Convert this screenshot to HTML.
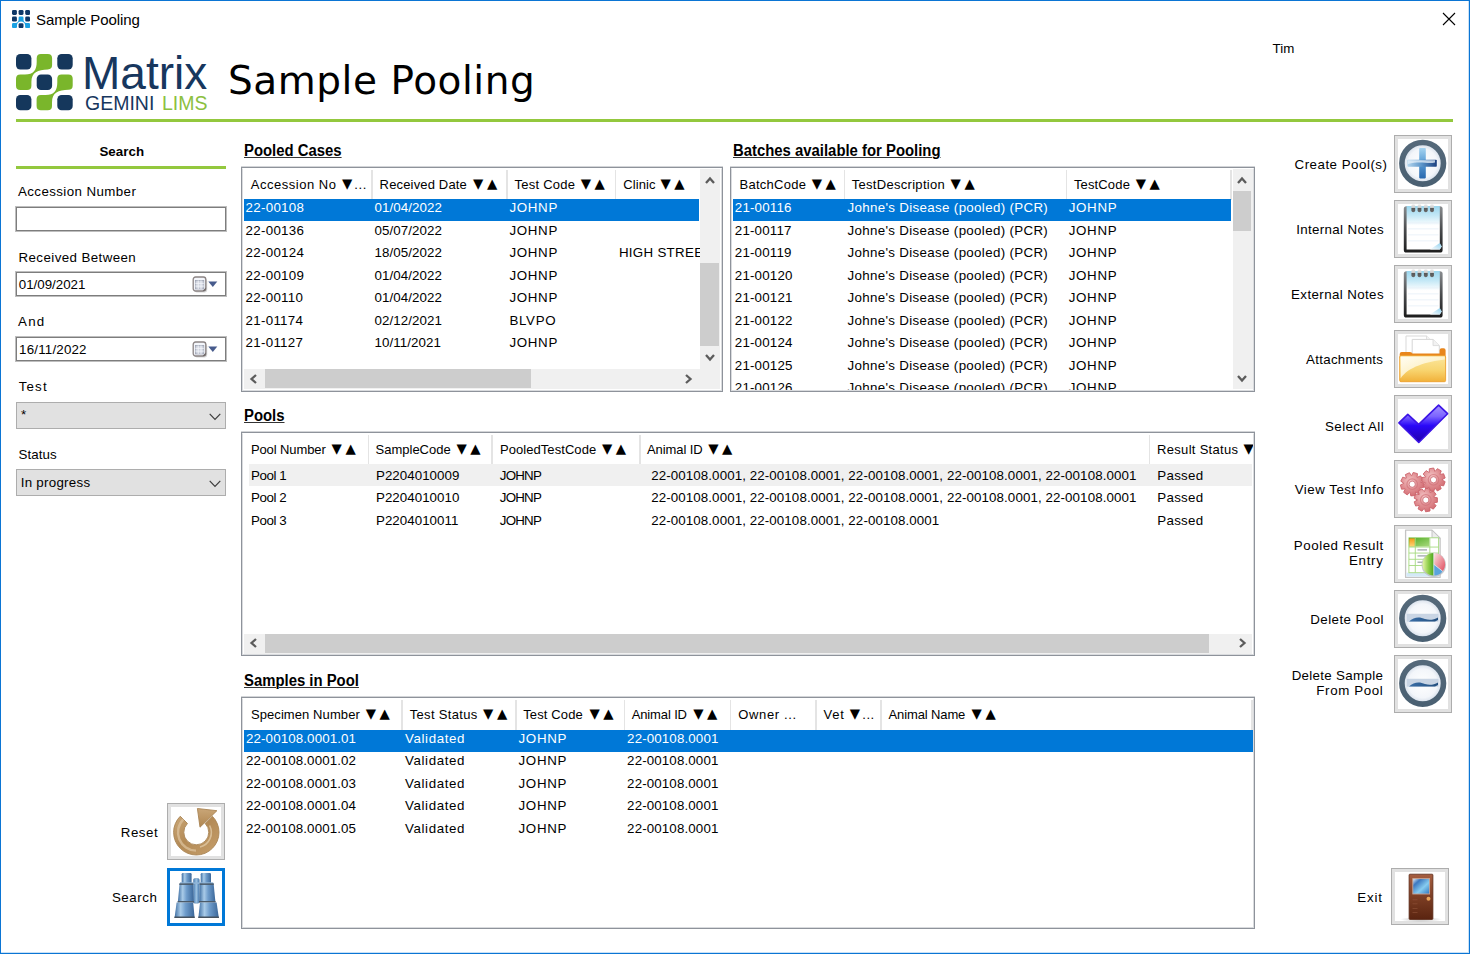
<!DOCTYPE html>
<html><head><meta charset="utf-8"><title>Sample Pooling</title>
<style>
*{box-sizing:border-box;margin:0;padding:0}
html,body{width:1470px;height:954px;overflow:hidden;background:#fff}
body{position:relative;font-family:"Liberation Sans",sans-serif;font-size:13.33px;color:#000;letter-spacing:0}
#win{position:absolute;left:0;top:0;width:1470px;height:954px;border:1px solid #0b75d4;box-shadow:inset -1px -1px 0 rgba(11,117,212,.22)}
.t{position:absolute;white-space:nowrap;line-height:16px;letter-spacing:.3px}
.r{text-align:right}
.gl{position:absolute;background:#93c83e}
.sec{font-weight:bold;font-size:16px;text-decoration:underline;text-decoration-thickness:1.4px;text-decoration-color:#333;text-underline-offset:1.2px;line-height:18px;letter-spacing:0;transform:scaleX(.93);transform-origin:0 0}
.lb{position:absolute;border:1px solid #8e939b;background:#fff;overflow:hidden;box-shadow:0 -1px 0 #d3d5d8}
.lb:after{content:"";position:absolute;left:0;top:0;right:0;bottom:0;border:1px solid #d9dbde;border-top-color:transparent;pointer-events:none}
.hd{position:absolute;top:1.5px;height:30px;line-height:30px;white-space:nowrap;font-size:13px}
.hd.ar{font-family:"DejaVu Sans",sans-serif;font-size:13.4px;letter-spacing:3.5px;top:1px}
.dv{position:absolute;top:2px;width:1.6px;height:30px;background:#e4e4e4}
.row{position:absolute;height:22px;white-space:nowrap}
.row span{position:absolute;top:0;line-height:17px;letter-spacing:.25px}
.sel{background:#0078d7;color:#fff}
.hot{background:#f0f0f0}
.r2 span{top:2.5px}
.sb{position:absolute;background:#f0f0f0}
.th{position:absolute;background:#cdcdcd}
.sa{position:absolute}
.btn{position:absolute;width:58px;height:58px;border:1px solid #adadad;background:#e1e1e1}
.btn i{position:absolute;left:3px;top:3px;right:3px;bottom:3px;background:#fff;display:block}
.btn svg{position:absolute;left:-1px;top:-1px}
.sbtn{border:3px solid #0078d7;background:#fff}
.sbtn svg{left:-3px;top:-3px}
.inp{position:absolute;border:1px solid #7d7d7d;background:#fff;box-shadow:0 0 0 1px rgba(125,125,125,.5)}
.cmb{position:absolute;border:1px solid #adadad;background:#e1e1e1}
</style></head><body>
<div id="win"></div>
<!-- TITLEBAR -->
<svg style="position:absolute;left:12px;top:10px" width="18" height="18" viewBox="0 0 18 18">
<g fill="#0d3767"><rect x="0" y="0" width="4.9" height="4.9" rx="1.3"/><rect x="6.6" y="0" width="4.9" height="4.9" rx="1.3"/><rect x="13.2" y="0" width="4.9" height="4.9" rx="1.3"/><rect x="0" y="6.6" width="4.9" height="4.9" rx="1.3"/><rect x="13.2" y="6.6" width="4.9" height="4.9" rx="1.3"/><rect x="6.6" y="13.2" width="4.9" height="4.9" rx="1.3"/></g>
<path fill="#18a0e2" d="M7.9 6.5 H10.2 Q11.5 6.5 11.5 7.8 V9.5 Q11.6 12.6 14.5 13.1 H16.8 Q18.1 13.1 18.1 14.4 V16.8 Q18.1 18.1 16.8 18.1 H14.4 Q13.1 18.1 13.1 16.8 V15 Q12.6 11.8 9.05 11.6 Q5.5 11.8 5 15 V16.8 Q5 18.1 3.7 18.1 H1.3 Q0 18.1 0 16.8 V14.4 Q0 13.1 1.3 13.1 H3.6 Q6.5 12.6 6.6 9.5 V7.8 Q6.6 6.5 7.9 6.5 Z"/>
</svg>
<div class="t" id="ttl" style="left:36px;top:10px;font-size:15px;line-height:20px;letter-spacing:-.1px">Sample Pooling</div>
<svg style="position:absolute;left:1442px;top:12px" width="14" height="14" viewBox="0 0 14 14"><path d="M1 1 L13 13 M13 1 L1 13" stroke="#000" stroke-width="1.1" fill="none"/></svg>
<!-- HEADER -->
<svg style="position:absolute;left:16px;top:54px" width="57" height="57" viewBox="0 0 57 57">
<g fill="#15375c"><rect x="0" y="0" width="15.4" height="15.4" rx="4.3"/><rect x="41.3" y="0" width="15.4" height="15.4" rx="4.3"/><rect x="20.7" y="20.5" width="15.4" height="15.5" rx="4.3"/><rect x="0" y="41" width="15.4" height="15.2" rx="4.3"/><rect x="41.3" y="41" width="15.4" height="15.2" rx="4.3"/></g>
<g fill="#7ab62b"><path id="sw" d="M24.9 0 H31.8 Q36.1 0 36.1 4.3 V11.1 Q36.1 15.4 31.8 15.4 C22 15.6 15.4 18 15.4 28 V31.7 Q15.4 36 11.1 36 H4.3 Q0 36 0 31.7 V24.8 Q0 20.5 4.3 20.5 H9 C17.5 20.5 20.7 16 20.7 8 V4.3 Q20.7 0 24.9 0 Z"/><path transform="translate(20.6,20.4)" d="M24.9 0 H31.8 Q36.1 0 36.1 4.3 V11.1 Q36.1 15.4 31.8 15.4 C22 15.6 15.4 18 15.4 28 V31.5 Q15.4 35.8 11.1 35.8 H4.3 Q0 35.8 0 31.5 V24.8 Q0 20.5 4.3 20.5 H9 C17.5 20.5 20.7 16 20.7 8 V4.3 Q20.7 0 24.9 0 Z"/></g>
</svg>
<div class="t" id="matrix" style="left:82px;top:47px;font-size:46px;line-height:52px;color:#17375e;letter-spacing:0">Matrix</div>
<div class="t" id="gemini" style="left:85px;top:92px;font-size:19.5px;line-height:22px;color:#17375e;letter-spacing:0;word-spacing:2.2px">GEMINI <span style="color:#8cc03f">LIMS</span></div>
<div class="t" id="big" style="left:228px;top:57px;font-family:'DejaVu Sans',sans-serif;font-size:39px;line-height:48px;letter-spacing:.55px">Sample Pooling</div>
<div class="t" id="tim" style="left:1272.6px;top:40.5px;letter-spacing:0">Tim</div>
<div class="gl" style="left:16px;top:119px;width:1437px;height:3px"></div>
<div class="t sec" style="left:244px;top:141.6px">Pooled Cases</div>
<div class="lb" style="left:241px;top:167px;width:482px;height:225px">
<div class="dv" style="left:129.0px"></div><div class="dv" style="left:264.0px"></div><div class="dv" style="left:372.8px"></div>
<div class="hd" style="left:8.8px;letter-spacing:0.52px">Accession No</div><div class="hd ar" style="left:99.9px">▼</div><div class="hd" style="left:112.3px;letter-spacing:.6px">...</div><div class="hd" style="left:137.6px;letter-spacing:0.16px">Received Date</div><div class="hd ar" style="left:231.1px">▼▲</div><div class="hd" style="left:272.6px;letter-spacing:0.23px">Test Code</div><div class="hd ar" style="left:338.8px">▼▲</div><div class="hd" style="left:381.2px;letter-spacing:0.12px">Clinic</div><div class="hd ar" style="left:418.4px">▼▲</div>
<div class="row  sel" style="left:2px;top:31.0px;width:455px"><span style="left:1.5px;letter-spacing:0.3px">22-00108</span><span style="left:130.5px;letter-spacing:0.07px">01/04/2022</span><span style="left:265.5px;letter-spacing:0.65px">JOHNP</span></div>
<div class="row " style="left:2px;top:53.5px;width:455px"><span style="left:1.5px;letter-spacing:0.3px">22-00136</span><span style="left:130.5px;letter-spacing:0.07px">05/07/2022</span><span style="left:265.5px;letter-spacing:0.65px">JOHNP</span></div>
<div class="row " style="left:2px;top:76.0px;width:455px"><span style="left:1.5px;letter-spacing:0.3px">22-00124</span><span style="left:130.5px;letter-spacing:0.07px">18/05/2022</span><span style="left:265.5px;letter-spacing:0.65px">JOHNP</span><span style="left:374.9px;letter-spacing:0.3px">HIGH STREE</span></div>
<div class="row " style="left:2px;top:98.5px;width:455px"><span style="left:1.5px;letter-spacing:0.3px">22-00109</span><span style="left:130.5px;letter-spacing:0.07px">01/04/2022</span><span style="left:265.5px;letter-spacing:0.65px">JOHNP</span></div>
<div class="row " style="left:2px;top:121.0px;width:455px"><span style="left:1.5px;letter-spacing:0.3px">22-00110</span><span style="left:130.5px;letter-spacing:0.07px">01/04/2022</span><span style="left:265.5px;letter-spacing:0.65px">JOHNP</span></div>
<div class="row " style="left:2px;top:143.5px;width:455px"><span style="left:1.5px;letter-spacing:0.3px">21-01174</span><span style="left:130.5px;letter-spacing:0.07px">02/12/2021</span><span style="left:265.5px;letter-spacing:0.65px">BLVPO</span></div>
<div class="row " style="left:2px;top:166.0px;width:455px"><span style="left:1.5px;letter-spacing:0.3px">21-01127</span><span style="left:130.5px;letter-spacing:0.07px">10/11/2021</span><span style="left:265.5px;letter-spacing:0.65px">JOHNP</span></div>
<div class="sb" style="left:458px;top:1px;width:20px;height:200px"></div><div class="th" style="left:458px;top:94.5px;width:19px;height:83.5px"></div><svg class="sa" style="left:462.5px;top:8.0px" width="10" height="8" viewBox="0 0 10 8"><path d="M1 7 L5 2.5 L9 7" fill="none" stroke="#5c5c5c" stroke-width="2.3"/></svg><svg class="sa" style="left:462.5px;top:185.8px" width="10" height="8" viewBox="0 0 10 8"><path d="M1 1 L5 5.5 L9 1" fill="none" stroke="#5c5c5c" stroke-width="2.3"/></svg><div class="sb" style="left:2px;top:201px;width:476px;height:20px"></div><div class="th" style="left:23px;top:201px;width:266.0px;height:19px"></div><svg class="sa" style="left:7.2px;top:205.6px" width="8" height="10" viewBox="0 0 8 10"><path d="M7 1 L2.5 5 L7 9" fill="none" stroke="#5c5c5c" stroke-width="2.3"/></svg><svg class="sa" style="left:443.0px;top:205.6px" width="8" height="10" viewBox="0 0 8 10"><path d="M1 1 L5.5 5 L1 9" fill="none" stroke="#5c5c5c" stroke-width="2.3"/></svg></div>
<div class="t sec" style="left:733px;top:141.6px">Batches available for Pooling</div>
<div class="lb" style="left:730px;top:167px;width:525px;height:225px">
<div class="dv" style="left:112.8px"></div><div class="dv" style="left:334.8px"></div><div class="dv" style="left:499.3px"></div>
<div class="hd" style="left:8.5px;letter-spacing:0.27px">BatchCode</div><div class="hd ar" style="left:80.8px">▼▲</div><div class="hd" style="left:120.7px;letter-spacing:0.3px">TestDescription</div><div class="hd ar" style="left:219.6px">▼▲</div><div class="hd" style="left:342.9px;letter-spacing:0.15px">TestCode</div><div class="hd ar" style="left:404.8px">▼▲</div>
<div class="row  sel" style="left:2px;top:31.0px;width:498px"><span style="left:1.8px;letter-spacing:0.18px">21-00116</span><span style="left:114.5px;letter-spacing:0.33px">Johne&#x27;s Disease (pooled) (PCR)</span><span style="left:335.7px;letter-spacing:0.7px">JOHNP</span></div>
<div class="row " style="left:2px;top:53.5px;width:498px"><span style="left:1.8px;letter-spacing:0.18px">21-00117</span><span style="left:114.5px;letter-spacing:0.33px">Johne&#x27;s Disease (pooled) (PCR)</span><span style="left:335.7px;letter-spacing:0.7px">JOHNP</span></div>
<div class="row " style="left:2px;top:76.0px;width:498px"><span style="left:1.8px;letter-spacing:0.18px">21-00119</span><span style="left:114.5px;letter-spacing:0.33px">Johne&#x27;s Disease (pooled) (PCR)</span><span style="left:335.7px;letter-spacing:0.7px">JOHNP</span></div>
<div class="row " style="left:2px;top:98.5px;width:498px"><span style="left:1.8px;letter-spacing:0.18px">21-00120</span><span style="left:114.5px;letter-spacing:0.33px">Johne&#x27;s Disease (pooled) (PCR)</span><span style="left:335.7px;letter-spacing:0.7px">JOHNP</span></div>
<div class="row " style="left:2px;top:121.0px;width:498px"><span style="left:1.8px;letter-spacing:0.18px">21-00121</span><span style="left:114.5px;letter-spacing:0.33px">Johne&#x27;s Disease (pooled) (PCR)</span><span style="left:335.7px;letter-spacing:0.7px">JOHNP</span></div>
<div class="row " style="left:2px;top:143.5px;width:498px"><span style="left:1.8px;letter-spacing:0.18px">21-00122</span><span style="left:114.5px;letter-spacing:0.33px">Johne&#x27;s Disease (pooled) (PCR)</span><span style="left:335.7px;letter-spacing:0.7px">JOHNP</span></div>
<div class="row " style="left:2px;top:166.0px;width:498px"><span style="left:1.8px;letter-spacing:0.18px">21-00124</span><span style="left:114.5px;letter-spacing:0.33px">Johne&#x27;s Disease (pooled) (PCR)</span><span style="left:335.7px;letter-spacing:0.7px">JOHNP</span></div>
<div class="row " style="left:2px;top:188.5px;width:498px"><span style="left:1.8px;letter-spacing:0.18px">21-00125</span><span style="left:114.5px;letter-spacing:0.33px">Johne&#x27;s Disease (pooled) (PCR)</span><span style="left:335.7px;letter-spacing:0.7px">JOHNP</span></div>
<div class="row " style="left:2px;top:211.0px;width:498px"><span style="left:1.8px;letter-spacing:0.18px">21-00126</span><span style="left:114.5px;letter-spacing:0.33px">Johne&#x27;s Disease (pooled) (PCR)</span><span style="left:335.7px;letter-spacing:0.7px">JOHNP</span></div>
<div class="sb" style="left:502px;top:1px;width:21px;height:220px"></div><div class="th" style="left:502px;top:22.8px;width:18px;height:40.4px"></div><svg class="sa" style="left:506.2px;top:8.0px" width="10" height="8" viewBox="0 0 10 8"><path d="M1 7 L5 2.5 L9 7" fill="none" stroke="#5c5c5c" stroke-width="2.3"/></svg><svg class="sa" style="left:506.2px;top:206.8px" width="10" height="8" viewBox="0 0 10 8"><path d="M1 1 L5 5.5 L9 1" fill="none" stroke="#5c5c5c" stroke-width="2.3"/></svg></div>
<div class="t sec" style="left:244px;top:406.6px">Pools</div>
<div class="lb" style="left:241px;top:432px;width:1014px;height:224px">
<div class="dv" style="left:125.7px"></div><div class="dv" style="left:249.1px"></div><div class="dv" style="left:397.1px"></div><div class="dv" style="left:906.8px"></div>
<div class="hd" style="left:8.9px;letter-spacing:-0.1px">Pool Number</div><div class="hd ar" style="left:89.6px">▼▲</div><div class="hd" style="left:133.6px;letter-spacing:-0.01px">SampleCode</div><div class="hd ar" style="left:214.5px">▼▲</div><div class="hd" style="left:257.9px;letter-spacing:0.07px">PooledTestCode</div><div class="hd ar" style="left:360.0px">▼▲</div><div class="hd" style="left:404.9px;letter-spacing:-0.07px">Animal ID</div><div class="hd ar" style="left:466.2px">▼▲</div><div class="hd" style="left:915.1px;letter-spacing:0.3px">Result Status</div><div class="hd ar" style="left:1001.5px">▼</div>
<div class="row r2 hot" style="left:7px;top:31.3px;width:1003px"><span style="left:1.9px;letter-spacing:-0.38px">Pool 1</span><span style="left:127.0px;letter-spacing:0.03px">P2204010009</span><span style="left:250.8px;letter-spacing:-0.8px">JOHNP</span><span style="left:402.2px;letter-spacing:0.1px">22-00108.0001, 22-00108.0001, 22-00108.0001, 22-00108.0001, 22-00108.0001</span><span style="left:908.3px;letter-spacing:0.27px">Passed</span></div>
<div class="row r2" style="left:7px;top:53.8px;width:1003px"><span style="left:1.9px;letter-spacing:-0.38px">Pool 2</span><span style="left:127.0px;letter-spacing:0.03px">P2204010010</span><span style="left:250.8px;letter-spacing:-0.8px">JOHNP</span><span style="left:402.2px;letter-spacing:0.1px">22-00108.0001, 22-00108.0001, 22-00108.0001, 22-00108.0001, 22-00108.0001</span><span style="left:908.3px;letter-spacing:0.27px">Passed</span></div>
<div class="row r2" style="left:7px;top:76.3px;width:1003px"><span style="left:1.9px;letter-spacing:-0.38px">Pool 3</span><span style="left:127.0px;letter-spacing:0.03px">P2204010011</span><span style="left:250.8px;letter-spacing:-0.8px">JOHNP</span><span style="left:402.2px;letter-spacing:0.1px">22-00108.0001, 22-00108.0001, 22-00108.0001</span><span style="left:908.3px;letter-spacing:0.27px">Passed</span></div>
<div class="sb" style="left:2px;top:201px;width:1008px;height:20px"></div><div class="th" style="left:23px;top:201px;width:943.6px;height:19px"></div><svg class="sa" style="left:7.2px;top:205.4px" width="8" height="10" viewBox="0 0 8 10"><path d="M7 1 L2.5 5 L7 9" fill="none" stroke="#5c5c5c" stroke-width="2.3"/></svg><svg class="sa" style="left:997.0px;top:205.4px" width="8" height="10" viewBox="0 0 8 10"><path d="M1 1 L5.5 5 L1 9" fill="none" stroke="#5c5c5c" stroke-width="2.3"/></svg></div>
<div class="t sec" style="left:244px;top:671.6px">Samples in Pool</div>
<div class="lb" style="left:241px;top:697px;width:1014px;height:232px">
<div class="dv" style="left:159.3px"></div><div class="dv" style="left:273.1px"></div><div class="dv" style="left:381.8px"></div><div class="dv" style="left:487.9px"></div><div class="dv" style="left:573.4px"></div><div class="dv" style="left:638.1px"></div><div class="dv" style="left:1009.3px"></div>
<div class="hd" style="left:8.9px;letter-spacing:0.09px">Specimen Number</div><div class="hd ar" style="left:123.7px">▼▲</div><div class="hd" style="left:167.7px;letter-spacing:0.32px">Test Status</div><div class="hd ar" style="left:241.1px">▼▲</div><div class="hd" style="left:281.2px;letter-spacing:0.14px">Test Code</div><div class="hd ar" style="left:347.4px">▼▲</div><div class="hd" style="left:389.7px;letter-spacing:-0.13px">Animal ID</div><div class="hd ar" style="left:451.3px">▼▲</div><div class="hd" style="left:496.3px;letter-spacing:0.64px">Owner ...</div><div class="hd" style="left:581.4px;letter-spacing:0.89px">Vet</div><div class="hd ar" style="left:607.8px">▼</div><div class="hd" style="left:620.2px;letter-spacing:.6px">...</div><div class="hd" style="left:646.5px;letter-spacing:-0.12px">Animal Name</div><div class="hd ar" style="left:729.6px">▼▲</div>
<div class="row  sel" style="left:2px;top:31.7px;width:1008.5px"><span style="left:2.0px;letter-spacing:0.12px">22-00108.0001.01</span><span style="left:161.0px;letter-spacing:0.61px">Validated</span><span style="left:274.5px;letter-spacing:0.7px">JOHNP</span><span style="left:383.1px;letter-spacing:0.13px">22-00108.0001</span></div>
<div class="row " style="left:2px;top:54.2px;width:1008.5px"><span style="left:2.0px;letter-spacing:0.12px">22-00108.0001.02</span><span style="left:161.0px;letter-spacing:0.61px">Validated</span><span style="left:274.5px;letter-spacing:0.7px">JOHNP</span><span style="left:383.1px;letter-spacing:0.13px">22-00108.0001</span></div>
<div class="row " style="left:2px;top:76.7px;width:1008.5px"><span style="left:2.0px;letter-spacing:0.12px">22-00108.0001.03</span><span style="left:161.0px;letter-spacing:0.61px">Validated</span><span style="left:274.5px;letter-spacing:0.7px">JOHNP</span><span style="left:383.1px;letter-spacing:0.13px">22-00108.0001</span></div>
<div class="row " style="left:2px;top:99.2px;width:1008.5px"><span style="left:2.0px;letter-spacing:0.12px">22-00108.0001.04</span><span style="left:161.0px;letter-spacing:0.61px">Validated</span><span style="left:274.5px;letter-spacing:0.7px">JOHNP</span><span style="left:383.1px;letter-spacing:0.13px">22-00108.0001</span></div>
<div class="row " style="left:2px;top:121.7px;width:1008.5px"><span style="left:2.0px;letter-spacing:0.12px">22-00108.0001.05</span><span style="left:161.0px;letter-spacing:0.61px">Validated</span><span style="left:274.5px;letter-spacing:0.7px">JOHNP</span><span style="left:383.1px;letter-spacing:0.13px">22-00108.0001</span></div>
</div>
<!-- LEFT PANEL -->
<div class="t" style="left:99.4px;top:144px;font-weight:bold;letter-spacing:.05px">Search</div>
<div class="gl" style="left:16px;top:166px;width:210px;height:3px"></div>
<div class="t " style="left:18.0px;top:184px;letter-spacing:0.4px">Accession Number</div>
<div class="inp" style="left:16px;top:207px;width:210px;height:24px"></div>
<div class="t " style="left:18.5px;top:249.5px;letter-spacing:0.41px">Received Between</div>
<div class="inp" style="left:16px;top:272px;width:210px;height:24px"></div>
<div class="t " style="left:18.8px;top:276.5px;letter-spacing:-0.01px">01/09/2021</div>
<svg style="position:absolute;left:191.9px;top:275.8px" width="16" height="17" viewBox="0 0 16 17"><rect x="2.4" y="2.8" width="12.8" height="13.6" rx="2.4" fill="#8a8a8a" opacity=".35"/><rect x="1.2" y="1" width="12.6" height="14" rx="2.4" fill="#f4f6fb" stroke="#8b8484" stroke-width="1.3"/><rect x="3.4" y="4.4" width="8.4" height="8.6" fill="#cdd1dc" stroke="#9a9fae" stroke-width=".7"/><path d="M3.4 7.3 H11.8 M3.4 10.1 H11.8 M6.2 4.4 V13 M9 4.4 V13" stroke="#f4f6fb" stroke-width=".9" fill="none"/><path d="M10.6 15 L13.8 11.6 V13 Q13.8 15 11.8 15 Z" fill="#6e6868"/></svg><svg style="position:absolute;left:208px;top:280.8px" width="10" height="7" viewBox="0 0 10 7"><path d="M0.3 0.5 H9.3 L4.8 6 Z" fill="#475b8c"/></svg>
<div class="t " style="left:18.0px;top:314px;letter-spacing:1.24px">And</div>
<div class="inp" style="left:16px;top:337px;width:210px;height:24px"></div>
<div class="t " style="left:19.1px;top:341.5px;letter-spacing:0.19px">16/11/2022</div>
<svg style="position:absolute;left:191.9px;top:341px" width="16" height="17" viewBox="0 0 16 17"><rect x="2.4" y="2.8" width="12.8" height="13.6" rx="2.4" fill="#8a8a8a" opacity=".35"/><rect x="1.2" y="1" width="12.6" height="14" rx="2.4" fill="#f4f6fb" stroke="#8b8484" stroke-width="1.3"/><rect x="3.4" y="4.4" width="8.4" height="8.6" fill="#cdd1dc" stroke="#9a9fae" stroke-width=".7"/><path d="M3.4 7.3 H11.8 M3.4 10.1 H11.8 M6.2 4.4 V13 M9 4.4 V13" stroke="#f4f6fb" stroke-width=".9" fill="none"/><path d="M10.6 15 L13.8 11.6 V13 Q13.8 15 11.8 15 Z" fill="#6e6868"/></svg><svg style="position:absolute;left:208px;top:346px" width="10" height="7" viewBox="0 0 10 7"><path d="M0.3 0.5 H9.3 L4.8 6 Z" fill="#475b8c"/></svg>
<div class="t " style="left:18.8px;top:379px;letter-spacing:1.12px">Test</div>
<div class="cmb" style="left:16px;top:402px;width:210px;height:27px"></div>
<div class="t" style="left:21px;top:407px">*</div>
<svg style="position:absolute;left:209px;top:412.6px" width="12" height="8" viewBox="0 0 12 8"><path d="M0.7 0.9 L6 6.3 L11.3 0.9" fill="none" stroke="#3c3c3c" stroke-width="1.2"/></svg>
<div class="t " style="left:18.5px;top:447px;letter-spacing:0.1px">Status</div>
<div class="cmb" style="left:16px;top:469px;width:210px;height:27px"></div>
<div class="t " style="left:20.7px;top:475px;letter-spacing:0.27px">In progress</div>
<svg style="position:absolute;left:209px;top:480px" width="12" height="8" viewBox="0 0 12 8"><path d="M0.7 0.9 L6 6.3 L11.3 0.9" fill="none" stroke="#3c3c3c" stroke-width="1.2"/></svg>
<!-- RIGHT PANEL -->
<div class="t " style="left:1294.5px;top:157px;letter-spacing:0.5px">Create Pool(s)</div>
<div class="btn" style="left:1394px;top:135px;width:58px;height:58px"><i></i><svg width="58" height="58" viewBox="0 0 58 58"><defs><radialGradient id="plg" cx="50%" cy="50%" r="50%"><stop offset="0" stop-color="#fff"/><stop offset=".72" stop-color="#f3f6fa"/><stop offset="1" stop-color="#cfd9e6"/></radialGradient><linearGradient id="plr" x1="0" y1="0" x2="0" y2="1"><stop offset="0" stop-color="#55697a"/><stop offset="1" stop-color="#4a6072"/></linearGradient><linearGradient id="plv" x1="0" y1="0" x2="0" y2="1"><stop offset="0" stop-color="#a6d4f0"/><stop offset=".45" stop-color="#5d9fd6"/><stop offset="1" stop-color="#2868ae"/></linearGradient><linearGradient id="plh" x1="0" y1="0" x2="1" y2="0"><stop offset="0" stop-color="#b4d6ee"/><stop offset=".5" stop-color="#5a93c8"/><stop offset="1" stop-color="#1b3f7e"/></linearGradient></defs><circle cx="28.7" cy="28.3" r="20" fill="url(#plg)"/><circle cx="28.7" cy="28.3" r="20.8" fill="none" stroke="url(#plr)" stroke-width="5.6"/><rect x="25.2" y="13" width="6.6" height="30.4" rx=".8" fill="url(#plv)"/><rect x="13.4" y="24.7" width="29.4" height="7" rx=".8" fill="url(#plh)"/><path d="M14 25.2 H41 V27.4 C34 29.4 27 25.6 14 29 Z" fill="#e8f1fa" opacity=".75"/></svg></div>
<div class="t " style="left:1296.3px;top:222px;letter-spacing:0.33px">Internal Notes</div>
<div class="btn" style="left:1394px;top:200px;width:58px;height:58px"><i></i><svg width="58" height="58" viewBox="0 0 58 58"><defs><linearGradient id="n1f" x1="0" y1="0" x2="0" y2="1"><stop offset="0" stop-color="#8a8d90"/><stop offset=".5" stop-color="#4a4c4e"/><stop offset="1" stop-color="#1c1c1c"/></linearGradient><linearGradient id="n1p" x1="0" y1="0" x2="0" y2="1"><stop offset="0" stop-color="#9ad6ee"/><stop offset=".22" stop-color="#c4e8f6"/><stop offset=".45" stop-color="#fff"/><stop offset="1" stop-color="#fff"/></linearGradient><linearGradient id="n1c" x1="0" y1="1" x2="1" y2="0"><stop offset="0" stop-color="#fff"/><stop offset="1" stop-color="#8fd0ee"/></linearGradient><linearGradient id="n1r" x1="0" y1="0" x2="0" y2="1"><stop offset="0" stop-color="#f4f4f4"/><stop offset=".45" stop-color="#c8c8c8"/><stop offset=".55" stop-color="#585858"/><stop offset="1" stop-color="#6a6a6a"/></linearGradient></defs><rect x="9.8" y="6.2" width="38.8" height="46.4" rx="2.6" fill="url(#n1f)"/><path d="M12.6 6 H45.8 V44 L47.6 46.5 L45.8 49.6 H12.6 Z" fill="url(#n1p)"/><path d="M36 49.4 L45.8 43 L47.8 46.4 L45.8 49.6 Z" fill="url(#n1c)"/><rect x="14" y="22.5" width="30.5" height=".8" fill="#e6eff8"/><rect x="14" y="28.5" width="30.5" height=".8" fill="#e6eff8"/><rect x="14" y="34.5" width="30.5" height=".8" fill="#e6eff8"/><rect x="14" y="40.5" width="30.5" height=".8" fill="#e6eff8"/><rect x="17.400000000000002" y="4" width="3.8" height="8.2" rx="1.9" fill="url(#n1r)"/><rect x="23.6" y="4" width="3.8" height="8.2" rx="1.9" fill="url(#n1r)"/><rect x="29.900000000000002" y="4" width="3.8" height="8.2" rx="1.9" fill="url(#n1r)"/><rect x="36.1" y="4" width="3.8" height="8.2" rx="1.9" fill="url(#n1r)"/></svg></div>
<div class="t " style="left:1291.1px;top:287px;letter-spacing:0.39px">External Notes</div>
<div class="btn" style="left:1394px;top:265px;width:58px;height:58px"><i></i><svg width="58" height="58" viewBox="0 0 58 58"><defs><linearGradient id="n2f" x1="0" y1="0" x2="0" y2="1"><stop offset="0" stop-color="#8a8d90"/><stop offset=".5" stop-color="#4a4c4e"/><stop offset="1" stop-color="#1c1c1c"/></linearGradient><linearGradient id="n2p" x1="0" y1="0" x2="0" y2="1"><stop offset="0" stop-color="#9ad6ee"/><stop offset=".22" stop-color="#c4e8f6"/><stop offset=".45" stop-color="#fff"/><stop offset="1" stop-color="#fff"/></linearGradient><linearGradient id="n2c" x1="0" y1="1" x2="1" y2="0"><stop offset="0" stop-color="#fff"/><stop offset="1" stop-color="#8fd0ee"/></linearGradient><linearGradient id="n2r" x1="0" y1="0" x2="0" y2="1"><stop offset="0" stop-color="#f4f4f4"/><stop offset=".45" stop-color="#c8c8c8"/><stop offset=".55" stop-color="#585858"/><stop offset="1" stop-color="#6a6a6a"/></linearGradient></defs><rect x="9.8" y="6.2" width="38.8" height="46.4" rx="2.6" fill="url(#n2f)"/><path d="M12.6 6 H45.8 V44 L47.6 46.5 L45.8 49.6 H12.6 Z" fill="url(#n2p)"/><path d="M36 49.4 L45.8 43 L47.8 46.4 L45.8 49.6 Z" fill="url(#n2c)"/><rect x="14" y="22.5" width="30.5" height=".8" fill="#e6eff8"/><rect x="14" y="28.5" width="30.5" height=".8" fill="#e6eff8"/><rect x="14" y="34.5" width="30.5" height=".8" fill="#e6eff8"/><rect x="14" y="40.5" width="30.5" height=".8" fill="#e6eff8"/><rect x="17.400000000000002" y="4" width="3.8" height="8.2" rx="1.9" fill="url(#n2r)"/><rect x="23.6" y="4" width="3.8" height="8.2" rx="1.9" fill="url(#n2r)"/><rect x="29.900000000000002" y="4" width="3.8" height="8.2" rx="1.9" fill="url(#n2r)"/><rect x="36.1" y="4" width="3.8" height="8.2" rx="1.9" fill="url(#n2r)"/></svg></div>
<div class="t " style="left:1306.1px;top:352px;letter-spacing:0.28px">Attachments</div>
<div class="btn" style="left:1394px;top:330px;width:58px;height:58px"><i></i><svg width="58" height="58" viewBox="0 0 58 58"><defs><linearGradient id="fob" x1="0" y1="0" x2="0" y2="1"><stop offset="0" stop-color="#fbe7a0"/><stop offset=".55" stop-color="#f8d570"/><stop offset="1" stop-color="#f1b13a"/></linearGradient><linearGradient id="foh" x1="0" y1="0" x2="1" y2="1"><stop offset="0" stop-color="#fffdf2"/><stop offset="1" stop-color="#fdf0c0" stop-opacity=".7"/></linearGradient></defs><path d="M12 6 H32.5 L38.6 12 V30 H12 Z" fill="#fff" stroke="#d9d9d9" stroke-width="1"/><path d="M32.5 6 V12 H38.6" fill="#f4f4f4" stroke="#d9d9d9" stroke-width=".8"/><path d="M18.2 9.4 H39 L45.3 15.6 V32 H18.2 Z" fill="#fff" stroke="#d6d6d6" stroke-width="1"/><path d="M39 9.4 V15.6 H45.3" fill="#f2f2f2" stroke="#d6d6d6" stroke-width=".8"/><path d="M5.7 24 Q5.7 22 7.7 22 H16 Q18 22 18.4 23.6 H45.6 V20.3 Q45.6 18.3 47.6 18.3 H49.6 Q51.6 18.3 51.6 20.3 V28 H5.7 Z" fill="#e8861c"/><rect x="5.7" y="25.8" width="45.9" height="25.9" rx="1.2" fill="url(#fob)" stroke="#eea02e" stroke-width=".9"/><path d="M6.6 26.6 H50.7 V29.4 C33 31.6 14 36.6 6.6 48.4 Z" fill="url(#foh)"/></svg></div>
<div class="t " style="left:1325.0px;top:419px;letter-spacing:0.42px">Select All</div>
<div class="btn" style="left:1394px;top:395px;width:58px;height:58px"><i></i><svg width="58" height="58" viewBox="0 0 58 58"><defs><linearGradient id="chg" x1="0" y1="0" x2="0" y2="1"><stop offset="0" stop-color="#a596ff"/><stop offset=".3" stop-color="#7c64ff"/><stop offset=".55" stop-color="#2a08f8"/><stop offset="1" stop-color="#2000a8"/></linearGradient></defs><path d="M4.9 27.9 L13.8 19.3 L24.7 29.4 L44.6 10.1 L53.6 18.7 L24.8 47.5 Z" fill="url(#chg)" stroke="#3c14e6" stroke-width="1.6" stroke-linejoin="round"/></svg></div>
<div class="t " style="left:1294.7px;top:482px;letter-spacing:0.49px">View Test Info</div>
<div class="btn" style="left:1394px;top:460px;width:58px;height:58px"><i></i><svg width="58" height="58" viewBox="0 0 58 58"><defs><radialGradient id="geg" cx="40%" cy="35%" r="75%"><stop offset="0" stop-color="#f3c2c3"/><stop offset=".5" stop-color="#e08e92"/><stop offset="1" stop-color="#cf656c"/></radialGradient></defs><path d="M26.47 22.22 L29.95 23.14 L29.51 27.57 L25.91 27.78 L25.80 28.00 L27.88 30.94 L24.69 34.05 L21.80 31.90 L21.59 32.00 L21.28 35.59 L16.84 35.92 L16.01 32.41 L15.78 32.35 L13.24 34.91 L9.63 32.31 L11.24 29.08 L11.11 28.89 L7.52 29.21 L6.42 24.90 L9.73 23.47 L9.76 23.23 L6.79 21.18 L8.73 17.16 L12.18 18.20 L12.35 18.03 L11.41 14.55 L15.47 12.72 L17.45 15.73 L17.69 15.72 L19.20 12.44 L23.49 13.65 L23.07 17.23 L23.26 17.37 L26.52 15.83 L29.03 19.52 L26.41 21.99 Z" fill="url(#geg)" stroke="#cc626a" stroke-width=".9" stroke-linejoin="round"/><circle cx="18.2" cy="24.2" r="5.3" fill="none" stroke="#d2747a" stroke-width="1.2" opacity=".7"/><circle cx="18.2" cy="24.2" r="3.1" fill="#fff" stroke="#c9666d" stroke-width=".8"/><path d="M48.00 19.93 L51.15 21.68 L49.62 25.87 L46.08 25.18 L45.93 25.36 L47.21 28.73 L43.35 30.95 L41.08 28.15 L40.85 28.19 L39.67 31.60 L35.28 30.82 L35.35 27.22 L35.14 27.10 L32.05 28.95 L29.19 25.53 L31.55 22.81 L31.47 22.59 L27.91 22.02 L27.91 17.56 L31.48 17.00 L31.56 16.77 L29.20 14.05 L32.06 10.64 L35.15 12.49 L35.36 12.38 L35.30 8.77 L39.69 8.00 L40.87 11.41 L41.10 11.45 L43.38 8.65 L47.23 10.89 L45.94 14.25 L46.09 14.43 L49.63 13.75 L51.15 17.94 L48.00 19.69 Z" fill="url(#geg)" stroke="#cc626a" stroke-width=".9" stroke-linejoin="round"/><circle cx="39.5" cy="19.8" r="5.3" fill="none" stroke="#d2747a" stroke-width="1.2" opacity=".7"/><circle cx="39.5" cy="19.8" r="3.1" fill="#fff" stroke="#c9666d" stroke-width=".8"/><path d="M39.83 37.20 L43.39 37.77 L43.39 42.23 L39.83 42.80 L39.75 43.02 L42.11 45.74 L39.25 49.15 L36.15 47.30 L35.95 47.42 L36.01 51.03 L31.62 51.80 L30.44 48.39 L30.21 48.35 L27.93 51.15 L24.08 48.92 L25.37 45.55 L25.21 45.37 L21.67 46.06 L20.15 41.87 L23.30 40.12 L23.30 39.88 L20.15 38.13 L21.67 33.94 L25.21 34.63 L25.37 34.45 L24.08 31.08 L27.93 28.85 L30.21 31.65 L30.44 31.61 L31.62 28.20 L36.01 28.97 L35.95 32.58 L36.15 32.70 L39.25 30.85 L42.11 34.26 L39.75 36.98 Z" fill="url(#geg)" stroke="#cc626a" stroke-width=".9" stroke-linejoin="round"/><circle cx="31.8" cy="40.0" r="5.3" fill="none" stroke="#d2747a" stroke-width="1.2" opacity=".7"/><circle cx="31.8" cy="40.0" r="3.1" fill="#fff" stroke="#c9666d" stroke-width=".8"/></svg></div>
<div class="t " style="left:1293.8px;top:538px;letter-spacing:0.54px">Pooled Result</div>
<div class="t " style="left:1348.9px;top:553px;letter-spacing:0.72px">Entry</div>
<div class="btn" style="left:1394px;top:525px;width:58px;height:58px"><i></i><svg width="58" height="58" viewBox="0 0 58 58"><defs><linearGradient id="shh" x1="0" y1="0" x2="1" y2="1"><stop offset="0" stop-color="#4eaa22"/><stop offset="1" stop-color="#a9da7e"/></linearGradient><linearGradient id="sho" x1="0" y1="0" x2="0" y2="1"><stop offset="0" stop-color="#f39a18"/><stop offset="1" stop-color="#fdd678"/></linearGradient><linearGradient id="shg" x1="0" y1="0" x2="1" y2="0"><stop offset="0" stop-color="#e4f4a8"/><stop offset=".55" stop-color="#8ccc48"/><stop offset="1" stop-color="#4aa41e"/></linearGradient><linearGradient id="shr" x1="0" y1="0" x2="1" y2="1"><stop offset="0" stop-color="#fbe4e4"/><stop offset="1" stop-color="#e04c5e"/></linearGradient></defs><path d="M11.6 5.2 H38 L46.1 13.2 V52.4 H11.6 Z" fill="#fff" stroke="#c4c4c4" stroke-width="1.3" stroke-linejoin="round"/><path d="M38 5.2 V13.2 H46.1 Z" fill="#ececec" stroke="#c4c4c4" stroke-width="1"/><rect x="12.4" y="47.6" width="33" height="4" fill="#d4e9f7"/><rect x="14.9" y="12.8" width="29.7" height="34.9" fill="#fff" stroke="#a6da80" stroke-width=".9"/><rect x="14.9" y="12.8" width="20.5" height="8.8" fill="url(#shh)"/><rect x="15.3" y="13.4" width="5.5" height="8.2" fill="url(#sho)"/><rect x="14.9" y="21.6" width="29.7" height=".9" fill="#a6da80"/><rect x="14.9" y="27.6" width="29.7" height=".9" fill="#a6da80"/><rect x="14.9" y="33.8" width="29.7" height=".9" fill="#a6da80"/><rect x="14.9" y="40.0" width="29.7" height=".9" fill="#a6da80"/><rect x="20.8" y="12.8" width=".9" height="34.9" fill="#a6da80"/><rect x="35.4" y="12.8" width=".9" height="34.9" fill="#a6da80"/><rect x="23.5" y="24.3" width="9.5" height="1.2" fill="#9aa0a6"/><rect x="23.5" y="30.3" width="9.5" height="1.2" fill="#9aa0a6"/><rect x="23.5" y="36.6" width="9.5" height="1.2" fill="#9aa0a6"/><circle cx="39.8" cy="39.9" r="12.200000000000001" fill="#b9bdc2" opacity=".8"/><path d="M39.8 27.999999999999996 A11.3 11.3 0 0 0 39.8 50.599999999999994 Z" fill="url(#shg)"/><path d="M39.8 27.999999999999996 A11.3 11.3 0 0 1 48.70 46.26 L39.8 39.3 Z" fill="url(#shr)"/><path d="M48.70 46.26 A11.3 11.3 0 0 1 39.8 50.599999999999994 L39.8 39.3 Z" fill="#5aa4dc"/><path d="M39.8 27.999999999999996 V50.599999999999994 M39.8 39.3 L48.70 46.26" stroke="#f4f4f4" stroke-width=".7" fill="none"/></svg></div>
<div class="t " style="left:1310.3px;top:612px;letter-spacing:0.43px">Delete Pool</div>
<div class="btn" style="left:1394px;top:590px;width:58px;height:58px"><i></i><svg width="58" height="58" viewBox="0 0 58 58"><defs><radialGradient id="m1g" cx="50%" cy="50%" r="50%"><stop offset="0" stop-color="#fff"/><stop offset=".72" stop-color="#f3f6fa"/><stop offset="1" stop-color="#cfd9e6"/></radialGradient><linearGradient id="m1r" x1="0" y1="0" x2="0" y2="1"><stop offset="0" stop-color="#55697a"/><stop offset="1" stop-color="#4a6072"/></linearGradient><linearGradient id="m1h" x1="0" y1="0" x2="1" y2="0"><stop offset="0" stop-color="#3a6ea6"/><stop offset="1" stop-color="#24507f"/></linearGradient></defs><circle cx="28.7" cy="28.3" r="20" fill="url(#m1g)"/><circle cx="28.7" cy="28.3" r="20.8" fill="none" stroke="url(#m1r)" stroke-width="5.6"/><rect x="12.7" y="23.8" width="31.9" height="8" rx=".8" fill="#c9d5e4"/><path d="M15 31.6 C20 26.5 26 26.8 31 29 C36 30.6 40 29.6 44 27.4 V30 L41 31.6 Z" fill="url(#m1h)"/></svg></div>
<div class="t " style="left:1291.7px;top:668px;letter-spacing:0.31px">Delete Sample</div>
<div class="t " style="left:1316.3px;top:683px;letter-spacing:0.63px">From Pool</div>
<div class="btn" style="left:1394px;top:655px;width:58px;height:58px"><i></i><svg width="58" height="58" viewBox="0 0 58 58"><defs><radialGradient id="m2g" cx="50%" cy="50%" r="50%"><stop offset="0" stop-color="#fff"/><stop offset=".72" stop-color="#f3f6fa"/><stop offset="1" stop-color="#cfd9e6"/></radialGradient><linearGradient id="m2r" x1="0" y1="0" x2="0" y2="1"><stop offset="0" stop-color="#55697a"/><stop offset="1" stop-color="#4a6072"/></linearGradient><linearGradient id="m2h" x1="0" y1="0" x2="1" y2="0"><stop offset="0" stop-color="#3a6ea6"/><stop offset="1" stop-color="#24507f"/></linearGradient></defs><circle cx="28.7" cy="28.3" r="20" fill="url(#m2g)"/><circle cx="28.7" cy="28.3" r="20.8" fill="none" stroke="url(#m2r)" stroke-width="5.6"/><rect x="12.7" y="23.8" width="31.9" height="8" rx=".8" fill="#c9d5e4"/><path d="M15 31.6 C20 26.5 26 26.8 31 29 C36 30.6 40 29.6 44 27.4 V30 L41 31.6 Z" fill="url(#m2h)"/></svg></div>
<div class="t " style="left:1357.3px;top:890px;letter-spacing:0.83px">Exit</div>
<div class="btn" style="left:1391px;top:868px;width:58px;height:57px"><i></i><svg width="58" height="58" viewBox="0 0 58 58"><defs><linearGradient id="dog" x1="0" y1="0" x2="0" y2="1"><stop offset="0" stop-color="#a65e40"/><stop offset=".5" stop-color="#7c3e24"/><stop offset="1" stop-color="#5a2410"/></linearGradient><linearGradient id="dow" x1="0" y1="0" x2="1" y2="1"><stop offset="0" stop-color="#e9f3fb"/><stop offset=".25" stop-color="#3c78c0"/><stop offset=".6" stop-color="#86ccf0"/><stop offset="1" stop-color="#2f74bc"/></linearGradient><radialGradient id="dos" cx="50%" cy="50%" r="50%"><stop offset="0" stop-color="#000" stop-opacity=".28"/><stop offset="1" stop-color="#000" stop-opacity="0"/></radialGradient></defs><g transform="translate(1 0)"><ellipse cx="29" cy="51.4" rx="21" ry="2.6" fill="url(#dos)"/><rect x="17.1" y="6.2" width="23.8" height="45.2" rx=".8" fill="url(#dog)" stroke="#5b2a18" stroke-width=".8"/><rect x="20.8" y="10.6" width="16.8" height="15.4" fill="url(#dow)" stroke="#c9a594" stroke-width=".9"/><circle cx="36.5" cy="30.8" r="2" fill="#eaa558"/><rect x="20.5" y="31.5" width="5" height=".7" fill="#9a5a40" opacity=".7"/><rect x="20.5" y="35.5" width="5" height=".7" fill="#9a5a40" opacity=".7"/><rect x="20.5" y="40" width="5" height=".7" fill="#9a5a40" opacity=".7"/><rect x="20.5" y="44" width="5" height=".7" fill="#9a5a40" opacity=".7"/></g></svg></div>
<!-- LEFT BUTTONS -->
<div class="t " style="left:120.7px;top:825px;letter-spacing:0.57px">Reset</div>
<div class="btn" style="left:167px;top:803px;width:58px;height:57px"><i></i><svg width="58" height="58" viewBox="0 0 58 58"><defs><linearGradient id="reg" x1="0" y1="0" x2="1" y2="1"><stop offset="0" stop-color="#caa777"/><stop offset=".45" stop-color="#b38a56"/><stop offset="1" stop-color="#c7a06c"/></linearGradient><linearGradient id="rea" x1="0" y1="0" x2="0" y2="1"><stop offset="0" stop-color="#c9a678"/><stop offset="1" stop-color="#b08650"/></linearGradient></defs><path d="M13.25 13.25 A22.7 22.7 0 1 0 45.35 13.25 L38.14 20.46 A12.5 12.5 0 1 1 20.46 20.46 Z" fill="url(#reg)" stroke="#a98455" stroke-width=".9" stroke-linejoin="round"/><path d="M30.4 5.5 L49.9 7.7 L33 24.2 Z" fill="url(#rea)" stroke="#a98455" stroke-width=".9" stroke-linejoin="round"/><path d="M16.3 16.4 A18.3 18.3 0 0 0 29 47.6" fill="none" stroke="#dcc29c" stroke-width="2.4" opacity=".75"/><path d="M33 44 A15 15 0 0 0 42.6 22.5" fill="none" stroke="#e0c8a4" stroke-width="1.6" opacity=".8"/></svg></div>
<div class="t " style="left:111.9px;top:890px;letter-spacing:0.55px">Search</div>
<div class="btn sbtn" style="left:167px;top:868px;width:58px;height:58px"><svg width="58" height="58" viewBox="0 0 58 58"><defs><linearGradient id="big1" x1="0" y1="0" x2="1" y2="0"><stop offset="0" stop-color="#3f6fa3"/><stop offset=".3" stop-color="#a9cbe8"/><stop offset=".55" stop-color="#6e9ccb"/><stop offset="1" stop-color="#3b6799"/></linearGradient><linearGradient id="big2" x1="0" y1="0" x2="1" y2="0"><stop offset="0" stop-color="#4a7db2"/><stop offset=".5" stop-color="#9cc2e2"/><stop offset="1" stop-color="#4a7db2"/></linearGradient></defs><rect x="26.4" y="10.6" width="5.9" height="24.6" rx="1.4" fill="url(#big2)" stroke="#5f86ad" stroke-width=".5"/><rect x="14.7" y="5.1" width="9.9" height="11" rx="1.2" fill="url(#big1)"/><rect x="33.7" y="5.1" width="10.3" height="11" rx="1.2" fill="url(#big1)"/><rect x="13" y="14.3" width="33.2" height="1.6" fill="#8fb4d6"/><path d="M12.6 15.6 H26.1 L26.8 33.8 H10.9 Z" fill="url(#big1)"/><path d="M32.7 15.6 H46.6 L48.4 33.8 H32.3 Z" fill="url(#big1)"/><rect x="12.3" y="15.4" width="14" height="1.5" fill="#4b5a69"/><rect x="32.6" y="15.4" width="14.2" height="1.5" fill="#4b5a69"/><rect x="10.6" y="33" width="16.4" height="1.6" fill="#4b5a69"/><rect x="32" y="33" width="16.6" height="1.6" fill="#4b5a69"/><path d="M9.6 34.6 H26.2 L27.6 49.6 H7.6 Z" fill="url(#big1)"/><path d="M33 34.6 H49.6 L51.8 49.6 H31.4 Z" fill="url(#big1)"/><rect x="7.3" y="48.4" width="20.5" height="1.6" rx=".6" fill="#46525e"/><rect x="31.2" y="48.4" width="20.8" height="1.6" rx=".6" fill="#46525e"/></svg></div>
</body></html>
